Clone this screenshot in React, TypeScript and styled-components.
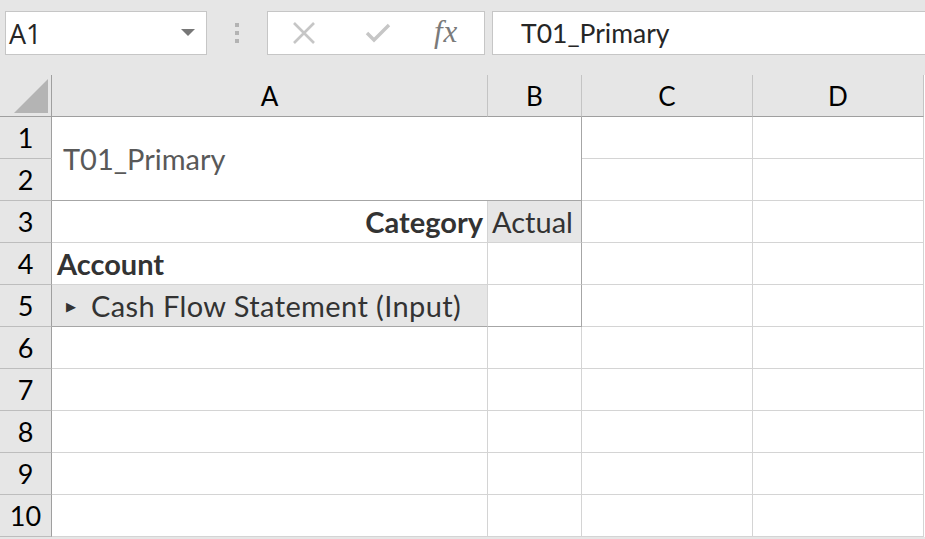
import React from "react";
import styled, { createGlobalStyle } from "styled-components";

const Global = createGlobalStyle`
  html, body { margin: 0; padding: 0; background: #ffffff; overflow: hidden; }
  * { box-sizing: border-box; }
`;

const FONT = `"Lato", "Liberation Sans", sans-serif`;

const Page = styled.div`
  width: 925px;
  height: 539px;
  background: #e6e6e6;
  font-family: ${FONT};
  overflow: hidden;
`;

const Toolbar = styled.div`
  height: 75px;
  display: flex;
  align-items: flex-start;
  padding: 11px 0 0 5px;
`;

const NameBox = styled.div`
  width: 202px;
  height: 44px;
  background: #fff;
  border: 1px solid #c6c6c6;
  display: flex;
  align-items: center;
  justify-content: space-between;
  padding: 0 11px 0 3px;
  font-family: "Open Sans", "Liberation Sans", sans-serif;
  font-size: 27px;
  color: #262626;
`;

const Dots = styled.div`
  width: 60px;
  height: 44px;
  display: flex;
  flex-direction: column;
  align-items: center;
  justify-content: center;
  gap: 4px;
  span {
    width: 4px;
    height: 4px;
    background: #b3b3b3;
  }
`;

const FxButtons = styled.div`
  width: 218px;
  height: 44px;
  background: #fff;
  border: 1px solid #c6c6c6;
  display: flex;
  align-items: center;
  padding-left: 24px;
`;

const IconSlot = styled.div<{ $w: number }>`
  width: ${(p) => p.$w}px;
  display: flex;
  align-items: center;
  justify-content: flex-start;
`;

const FxText = styled.span`
  font-family: "Liberation Serif", "DejaVu Serif", serif;
  font-style: italic;
  font-size: 31px;
  color: #7a7a7a;
  letter-spacing: 1px;
  line-height: 1;
  margin-top: -3px;
`;

const FormulaInput = styled.div`
  flex: 1;
  margin-left: 7px;
  margin-right: -4px;
  height: 44px;
  background: #fff;
  border: 1px solid #c6c6c6;
  display: flex;
  align-items: center;
  padding-left: 28px;
  font-family: ${FONT};
  font-size: 26.5px;
  color: #262626;
`;

const Grid = styled.div`
  display: grid;
  grid-template-columns: 52px 436px 94px 171px 171px 1px;
  grid-auto-rows: 42px;
  background: #fff;
`;

const ColHead = styled.div<{ $first?: boolean }>`
  background: #e6e6e6;
  border-bottom: 1px solid #9f9f9f;
  border-right: 1px solid ${(p) => (p.$first ? "#9f9f9f" : "#c4c4c4")};
  display: flex;
  align-items: center;
  justify-content: center;
  font-size: 26px;
  color: #000;
  position: relative;
`;

const Corner = styled.svg`
  position: absolute;
  left: 14px;
  top: 4px;
`;

const RowHead = styled.div`
  background: #e6e6e6;
  border-bottom: 1px solid #bdbdbd;
  border-right: 1px solid #9f9f9f;
  display: flex;
  align-items: center;
  justify-content: center;
  font-size: 27px;
  color: #000;
`;

type CellProps = {
  $r?: string;
  $b?: string;
  $bg?: string;
  $align?: "left" | "right";
  $pl?: number;
  $pr?: number;
  $bold?: boolean;
  $color?: string;
  $ls?: number;
  $colSpan?: number;
  $rowSpan?: number;
};

const Cell = styled.div<CellProps>`
  background: ${(p) => p.$bg || "#fff"};
  border-right: 1px solid ${(p) => p.$r || "#d4d4d4"};
  border-bottom: 1px solid ${(p) => p.$b || "#d4d4d4"};
  display: flex;
  align-items: center;
  justify-content: ${(p) => (p.$align === "right" ? "flex-end" : "flex-start")};
  padding-left: ${(p) => p.$pl ?? 5}px;
  padding-right: ${(p) => p.$pr ?? 3}px;
  font-size: 29px;
  font-weight: ${(p) => (p.$bold ? 700 : 400)};
  letter-spacing: ${(p) => p.$ls ?? 0}px;
  color: ${(p) => p.$color || "#333"};
  white-space: nowrap;
  overflow: hidden;
  grid-column: span ${(p) => p.$colSpan || 1};
  grid-row: span ${(p) => p.$rowSpan || 1};
`;

const Edge = styled.div`
  background: #fff;
`;

const Caret = styled.span`
  font-size: 13px;
  color: #333;
  letter-spacing: 0;
  margin-right: 15px;
  margin-left: 9px;
`;

const DARK = "#a6a6a6";

export default function App() {
  const emptyRows = [6, 7, 8, 9, 10];
  return (
    <>
      <Global />
      <Page>
        <Toolbar>
          <NameBox>
            <span>A1</span>
            <svg width="14" height="8" viewBox="0 0 14 8">
              <polygon points="0,0 14,0 7,7" fill="#777" />
            </svg>
          </NameBox>
          <Dots>
            <span />
            <span />
            <span />
          </Dots>
          <FxButtons>
            <IconSlot $w={73}>
              <svg width="24" height="24" viewBox="0 0 24 24">
                <path d="M2 2 L22 22 M22 2 L2 22" stroke="#c6c6c6" strokeWidth="2.6" fill="none" />
              </svg>
            </IconSlot>
            <IconSlot $w={69}>
              <svg width="26" height="22" viewBox="0 0 26 22">
                <path d="M2 11 L9 18 L24 3" stroke="#c6c6c6" strokeWidth="3.4" fill="none" />
              </svg>
            </IconSlot>
            <IconSlot $w={40}>
              <FxText>fx</FxText>
            </IconSlot>
          </FxButtons>
          <FormulaInput>T01_Primary</FormulaInput>
        </Toolbar>
        <Grid>
          <ColHead $first>
            <Corner width="36" height="36" viewBox="0 0 36 36">
              <polygon points="34,0 34,34 0,34" fill="#b4b4b4" />
            </Corner>
          </ColHead>
          <ColHead>A</ColHead>
          <ColHead>B</ColHead>
          <ColHead>C</ColHead>
          <ColHead>D</ColHead>
          <Edge />

          <RowHead>1</RowHead>
          <Cell $colSpan={2} $rowSpan={2} $r={DARK} $b={DARK} $pl={11} $color="#595959">
            T01_Primary
          </Cell>
          <Cell />
          <Cell />
          <Edge />

          <RowHead>2</RowHead>
          <Cell />
          <Cell />
          <Edge />

          <RowHead>3</RowHead>
          <Cell $align="right" $bold $pr={4}>
            Category
          </Cell>
          <Cell $r={DARK} $bg="#e6e6e6" $color="#333" $pl={4}>
            Actual
          </Cell>
          <Cell />
          <Cell />
          <Edge />

          <RowHead>4</RowHead>
          <Cell $bold $pl={5}>
            Account
          </Cell>
          <Cell $r={DARK} />
          <Cell />
          <Cell />
          <Edge />

          <RowHead>5</RowHead>
          <Cell $bg="#e6e6e6" $b={DARK} $pl={5} $ls={0.4}>
            <Caret>▶</Caret>
            Cash Flow Statement (Input)
          </Cell>
          <Cell $r={DARK} $b={DARK} />
          <Cell />
          <Cell />
          <Edge />

          {emptyRows.map((n) => (
            <React.Fragment key={n}>
              <RowHead>{n}</RowHead>
              <Cell />
              <Cell />
              <Cell />
              <Cell />
              <Edge />
            </React.Fragment>
          ))}
        </Grid>
      </Page>
    </>
  );
}
